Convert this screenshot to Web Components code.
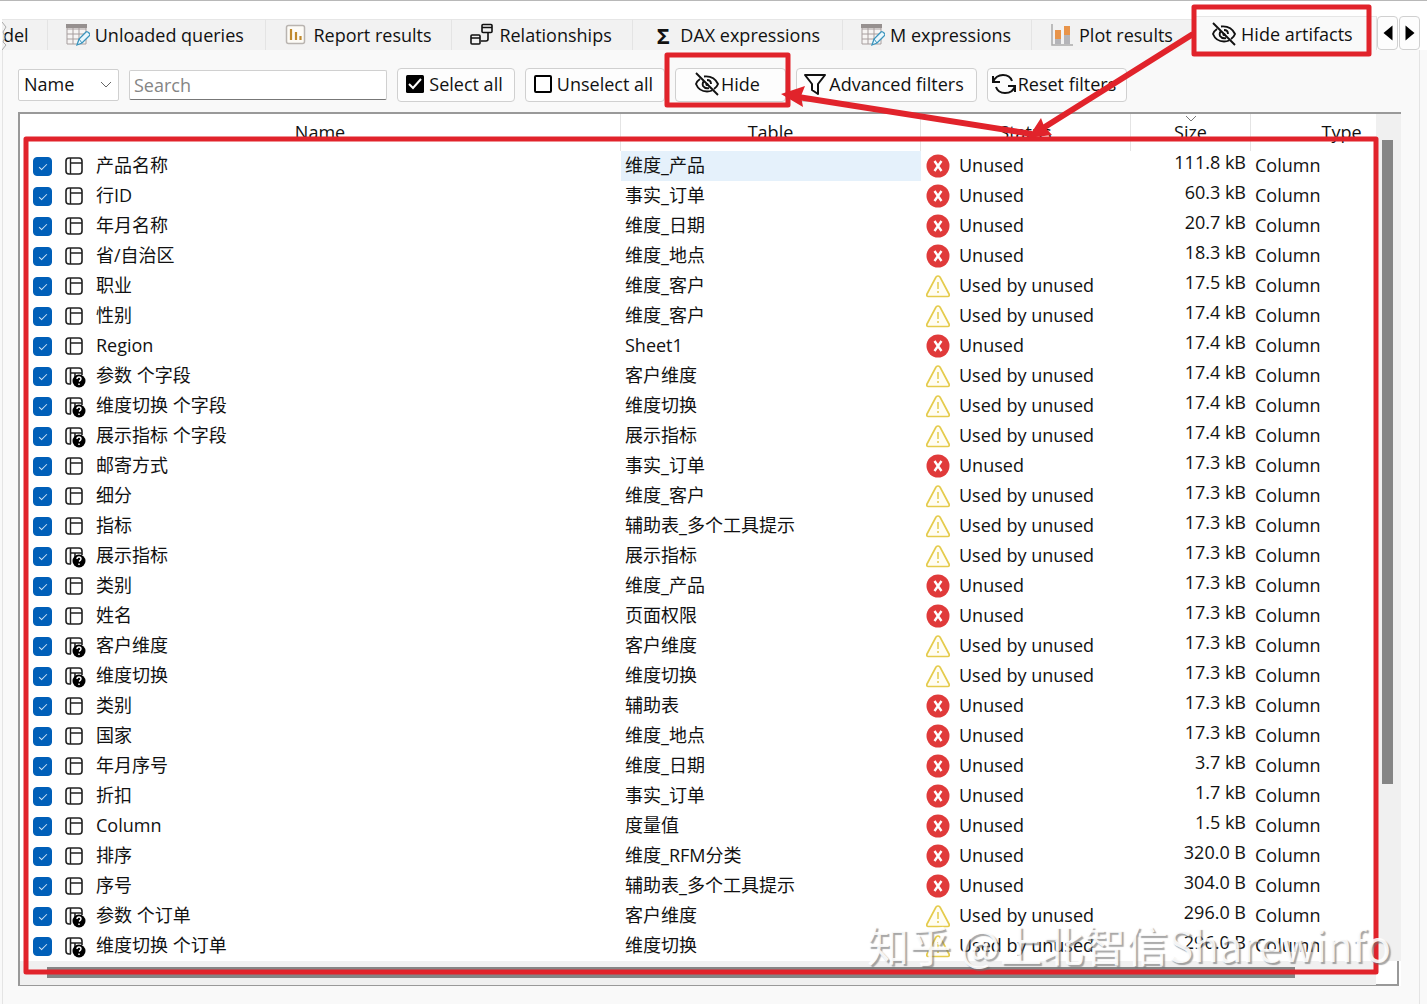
<!DOCTYPE html>
<html lang="zh">
<head>
<meta charset="utf-8">
<title>Hide artifacts</title>
<style>
  body {
    margin: 0;
    background: #f9f9f9;
    color: #111;
    font: 18px/24px "Open Sans", "Noto Sans CJK SC", sans-serif;
  }
</style>
</head>
<body>
<artifacts-app></artifacts-app>

<script>
const ICONS = {
  sheet: `<rect x="1" y="2" width="19" height="19" fill="#f7f5f4"/><path d="M1 2h19v19H1zM1 11h19M1 16h19M7 5v16M13 5v16M1 6h19" fill="none" stroke="#a79e9e"/><path d="M0 1h21v4H0z" fill="#96908f"/><path d="M11 22l2-6 7-7q1-1 3 1t0 3l-7 7z" fill="#e9f7fd" stroke="#3a94bd" stroke-width="1.3"/><path d="M13 16l3 4" stroke="#3a94bd"/>`,
  report: `<rect x="2.5" y="2.5" width="18" height="18" rx="2" fill="#fdfbf6" stroke="#b9b4b0" stroke-width="1.5"/><path d="M7 6v11M12 9v8M16.5 13v4" stroke="#c08a2d" stroke-width="2.2" fill="none"/>`,
  relations: `<path d="M13 1.5h8q1 0 1 1v6q0 1-1 1h-8q-1 0-1-1v-6q0-1 1-1zM12 4.5h10M2 12h7q1 0 1 1v7q0 1-1 1H2q-1 0-1-1v-7q0-1 1-1zM1 15h9M18 10v6q0 2-2 2h-5" fill="none" stroke="#111" stroke-width="1.6"/>`,
  plot: `<path d="M2 1v21h21" fill="none" stroke="#aaa" stroke-width="1.5"/><path d="M5 7h6v9H5zM14 3h6v9h-6z" fill="#e8944a"/><path d="M5 16h6v5H5zM14 12h6v9h-6z" fill="#b4b4b8"/>`,
  hide: `<path d="M5 7Q2 9 1 12q3 7.500 11 7.500 3 0 5-1M9 4.500q10-1 14 7.500-1 3-4 5M9 9q-2 2-1 5 2 3 6 2M12 8q4 0 4 4M1 1l22 22" fill="none" stroke="#111" stroke-width="1.9"/><circle cx="12" cy="12.500" r="1.500" fill="#111"/>`,
  checked: `<rect x="3" y="3" width="18" height="18" rx="1.5" fill="#000"/><path d="M6 12l4 4 8-9" fill="none" stroke="#fff" stroke-width="2"/>`,
  empty: `<rect x="4" y="4" width="16" height="16" rx="1" fill="#fff" stroke="#000" stroke-width="2"/>`,
  filter: `<path d="M2 3h20l-7 9v10l-6-4v-6z" fill="none" stroke="#111" stroke-width="2" stroke-linejoin="round"/>`,
  reset: `<path d="M1 4v6h7M1 10Q4 3 11 3q7 0 9 6M23 20v-6h-7M23 14q-2 7-10 7-7 0-9-6" fill="none" stroke="#111" stroke-width="2"/>`,
  unused: `<circle cx="12" cy="12" r="11.5" fill="#e03a3a"/><path d="M8.5 7l7 10M15.5 7l-7 10" stroke="#fff" stroke-width="2.4"/>`,
  warning: `<path d="M12 2q1 0 2 1l9 17q1 2-1 2.5H2Q0 22 1 20L10 3q1-1 2-1z" fill="#fffdf3" stroke="#e5cb4c" stroke-width="1.7"/><path d="M12 8v7M12 17v2" stroke="#e5cb4c" stroke-width="1.5"/>`,
  column: `<rect x="4" y="4" width="16" height="16" rx="3" fill="#fff" stroke="#222" stroke-width="1.6"/><path d="M8.5 4v16M8.5 9H20" stroke="#222" stroke-width="1.4"/>`,
  field: `<path d="M9 20H7q-3 0-3-3V7q0-3 3-3h10q3 0 3 3v4M8.5 4v16M8.5 9H20M13 9v4" fill="none" stroke="#222" stroke-width="1.6"/><circle cx="17" cy="17" r="6.5" fill="#000"/><path d="M15 15q0-2 2-2t2 2q0 1-2 2.5M17 19.5v1.5" fill="none" stroke="#fff" stroke-width="1.4"/>`,
  left: `<path d="M18 2v20L6 12z" fill="#000"/>`,
  right: `<path d="M6 2v20l12-10z" fill="#000"/>`
};

class UiIcon extends HTMLElement {
  connectedCallback() {
    if (this.shadowRoot) return;
    this.attachShadow({ mode: 'open' }).innerHTML = `
      <style>
        :host { display: inline-block; flex: none; width: 24px; height: 24px; }
        svg { display: block; width: 100%; height: 100%; }
      </style>
      <svg viewBox="0 0 24 24" aria-hidden="true">${ICONS[this.getAttribute('name')]}</svg>`;
  }
}
customElements.define('ui-icon', UiIcon);

class TabItem extends HTMLElement {
  connectedCallback() {
    this.attachShadow({ mode: 'open' }).innerHTML = `
      <style>
        :host { display: flex; min-width: 0; height: 31px; background: #f2f2f2; border-top: 1px solid #e6e6e6; border-right: 1px solid #e4e4e4; box-sizing: border-box; }
        :host([selected]) { height: 34px; background: #f9f9f9; }
        button { display: flex; flex: 1; align-items: center; gap: 5px; border: 0; padding: 0 0 0 18px; background: none; font: inherit; color: inherit; white-space: nowrap; }
        :host([clipped]) button { padding-left: 1px; }
      </style>
      <button role="tab" aria-selected="${this.hasAttribute('selected')}"><slot name="icon"></slot><slot></slot></button>`;
  }
}
customElements.define('tab-item', TabItem);

class ToolButton extends HTMLElement {
  connectedCallback() {
    this.attachShadow({ mode: 'open' }).innerHTML = `
      <style>
        :host { display: block; height: 34px; }
        button { display: flex; width: 100%; height: 100%; align-items: center; justify-content: center; gap: 2px; box-sizing: border-box; padding: 0 6px 2px 0; border: 1px solid #d0d0d0; border-radius: 4px; background: #fdfdfd; font: inherit; color: inherit; white-space: nowrap; }
      </style>
      <button><ui-icon name="${this.getAttribute('icon')}"></ui-icon><slot></slot></button>`;
  }
}
customElements.define('tool-button', ToolButton);

// name, table, status (x = unused, w = used by unused), size, field parameter
const ROWS = [
  ['产品名称', '维度_产品', 'x', '111.8 kB'],
  ['行ID', '事实_订单', 'x', '60.3 kB'],
  ['年月名称', '维度_日期', 'x', '20.7 kB'],
  ['省/自治区', '维度_地点', 'x', '18.3 kB'],
  ['职业', '维度_客户', 'w', '17.5 kB'],
  ['性别', '维度_客户', 'w', '17.4 kB'],
  ['Region', 'Sheet1', 'x', '17.4 kB'],
  ['参数 个字段', '客户维度', 'w', '17.4 kB', true],
  ['维度切换 个字段', '维度切换', 'w', '17.4 kB', true],
  ['展示指标 个字段', '展示指标', 'w', '17.4 kB', true],
  ['邮寄方式', '事实_订单', 'x', '17.3 kB'],
  ['细分', '维度_客户', 'w', '17.3 kB'],
  ['指标', '辅助表_多个工具提示', 'w', '17.3 kB'],
  ['展示指标', '展示指标', 'w', '17.3 kB', true],
  ['类别', '维度_产品', 'x', '17.3 kB'],
  ['姓名', '页面权限', 'x', '17.3 kB'],
  ['客户维度', '客户维度', 'w', '17.3 kB', true],
  ['维度切换', '维度切换', 'w', '17.3 kB', true],
  ['类别', '辅助表', 'x', '17.3 kB'],
  ['国家', '维度_地点', 'x', '17.3 kB'],
  ['年月序号', '维度_日期', 'x', '3.7 kB'],
  ['折扣', '事实_订单', 'x', '1.7 kB'],
  ['Column', '度量值', 'x', '1.5 kB'],
  ['排序', '维度_RFM分类', 'x', '320.0 B'],
  ['序号', '辅助表_多个工具提示', 'x', '304.0 B'],
  ['参数 个订单', '客户维度', 'w', '296.0 B', true],
  ['维度切换 个订单', '维度切换', 'w', '296.0 B', true]
];

class ArtifactGrid extends HTMLElement {
  connectedCallback() {
    this.attachShadow({ mode: 'open' }).innerHTML = `
      <style>
        :host { display: grid; grid-template-columns: 1fr 25px; border: solid #999; border-width: 2px 0 0 2px; background: #fff; }
        .view { overflow: hidden; }
        /* the last column runs on behind the scroll bar */
        table { width: calc(100% + 57px); table-layout: fixed; border-collapse: separate; border-spacing: 0; }
        th { height: 37px; padding: 0 0 2px; box-sizing: border-box; border-right: 1px solid #e4e4e4; font-weight: normal; position: relative; }
        td { height: 30px; padding: 0; box-sizing: border-box; white-space: nowrap; }
        td:nth-child(2), td:nth-child(5) { padding: 0 0 2px 4px; }
        td:nth-child(4) { padding-right: 5px; text-align: right; vertical-align: top; line-height: 22px; }
        tr:first-child td.current { background: #e5f1fb; }
        .sort { position: absolute; top: 1px; left: 0; right: 0; margin: auto; width: 12px; height: 7px; }
        .name, .status { display: flex; align-items: center; }
        .name { padding-left: 13px; gap: 10px; }
        .name label { padding-bottom: 2px; }
        .status { padding-left: 5px; gap: 9px; }
        .status span { padding-bottom: 2px; }
        input { appearance: none; width: 19px; height: 19px; margin: 0; border: 1px solid #005fb8; border-radius: 4px; background: #fff; display: grid; place-items: center; }
        input:checked { background: #005fb8; }
        input:checked::after { content: ""; width: 7px; height: 3px; border: solid #cfe2f3; border-width: 0 0 1px 1px; transform: rotate(-45deg); }
        .vbar, .hbar { background: #f0f0f0; display: flex; }
        .vbar { flex-direction: column; align-items: flex-start; padding: 26px 0 177px 6px; }
        .hbar { height: 25px; box-sizing: border-box; border-bottom: 1px solid #999; padding: 6px 81px 0 27px; }
        .vbar i { width: 11px; flex: 1; background: #858585; }
        .hbar i { height: 11px; flex: 1; background: #858585; }
        .corner { border: solid #999; border-width: 0 2px 2px 0; margin-right: 2px; }
      </style>
      <div class="view">
        <table>
          <colgroup><col><col style="width:300px"><col style="width:210px"><col style="width:120px"><col style="width:182px"></colgroup>
          <thead><tr><th>Name</th><th>Table</th><th>Status</th><th><svg class="sort" viewBox="0 0 12 7"><path d="M1 1l5 5 5-5" fill="none" stroke="#777"/></svg>Size</th><th>Type</th></tr></thead>
          <tbody></tbody>
        </table>
      </div>
      <div class="vbar"><i></i></div>
      <div class="hbar"><i></i></div>
      <div class="corner"></div>`;
    this.$body = this.shadowRoot.querySelector('tbody');
    this.renderRows();
  }

  renderRows() {
    this.$body.innerHTML = ROWS.map(([name, table, status, size, field], i) => `
      <tr>
        <td><div class="name">
          <input type="checkbox" id="row${i}" checked>
          <ui-icon name="${field ? 'field' : 'column'}"></ui-icon>
          <label for="row${i}">${name}</label>
        </div></td>
        <td class="current">${table}</td>
        <td><div class="status">
          <ui-icon name="${status === 'x' ? 'unused' : 'warning'}"></ui-icon>
          <span>${status === 'x' ? 'Unused' : 'Used by unused'}</span>
        </div></td>
        <td>${size}</td>
        <td>Column</td>
      </tr>`).join('');
  }
}
customElements.define('artifact-grid', ArtifactGrid);

// red boxes and arrows drawn over the window
class MarkupLayer extends HTMLElement {
  connectedCallback() {
    this.attachShadow({ mode: 'open' }).innerHTML = `
      <style>
        :host { position: absolute; inset: 0; overflow: hidden; pointer-events: none; }
        svg { position: absolute; top: -1px; left: 0; }
        .stamp { position: absolute; right: 36px; bottom: 34px; font-size: 42px; line-height: 52px; white-space: nowrap; color: rgba(255, 255, 255, .9); text-shadow: 2px 2px 1px rgba(110, 110, 110, .6); font-family: "Noto Sans CJK SC", sans-serif; }
      </style>
      <svg width="1427" height="1004" viewBox="0 0 1427 1004">
        <g fill="none" stroke="#e1232b" stroke-width="5" stroke-linejoin="round">
          <rect x="1194" y="7" width="175" height="47"/>
          <rect x="667" y="55" width="121" height="50"/>
          <rect x="26" y="139" width="1350" height="833"/>
          <path d="M1193 34L1040 130M1032 134L798 97" stroke-width="6"/>
        </g>
        <path d="M1028 138l13-20 3 8 8 9zM781 94l24-8-4 10 2 11z" fill="#e1232b"/>
      </svg>
      <div class="stamp"><slot></slot></div>`;
  }
}
customElements.define('markup-layer', MarkupLayer);

class ArtifactsApp extends HTMLElement {
  connectedCallback() {
    this.attachShadow({ mode: 'open' }).innerHTML = `
      <style>
        :host { display: flex; flex-direction: column; position: relative; min-height: 100vh; box-sizing: border-box; border-top: 1px solid #b8b8b8; }
        nav { display: flex; align-items: flex-end; padding: 15px 7px 0 2px; background: #fff; }
        .torn { flex: none; width: 5px; height: 28px; margin-right: -5px; z-index: 1; }
        .sigma { width: 24px; text-align: center; font-size: 22px; font-weight: bold; }
        .arrow { display: flex; align-items: center; justify-content: center; width: 21px; height: 34px; box-sizing: border-box; padding: 0; border: 1px solid #d0d0d0; border-radius: 4px; background: #fdfdfd; }
        .arrow ui-icon { width: 18px; height: 18px; }
        .arrow + .arrow { margin-left: 1px; }
        main { flex: 1; margin: 0 7px 0 2px; padding: 18px 18px 18px 15px; border: solid #e4e4e4; border-width: 0 1px; }
        .tools { display: flex; align-items: center; gap: 10px; margin-bottom: 10px; }
        .field { position: relative; display: flex; }
        select, input { box-sizing: border-box; font: inherit; color: inherit; background: #fff; border: 1px solid #d0d0d0; border-radius: 2px; }
        select { appearance: none; width: 101px; height: 32px; padding: 0 5px 2px; }
        .field svg { position: absolute; right: 7px; top: 12px; pointer-events: none; }
        input { width: 258px; height: 30px; padding: 0 4px; border-bottom-color: #777; }
        input::placeholder { color: #858585; }
      </style>
      <nav role="tablist">
        <svg class="torn" viewBox="0 0 5 28"><path d="M0 0l4 5-3 5 2 5-2 5 3 3-4 5" fill="none" stroke="#aaa"/></svg>
        <tab-item style="flex: 45 1 0" clipped>del</tab-item>
        <tab-item style="flex: 219 1 0"><ui-icon slot="icon" name="sheet"></ui-icon>Unloaded queries</tab-item>
        <tab-item style="flex: 186 1 0"><ui-icon slot="icon" name="report"></ui-icon>Report results</tab-item>
        <tab-item style="flex: 181 1 0"><ui-icon slot="icon" name="relations"></ui-icon>Relationships</tab-item>
        <tab-item style="flex: 210 1 0"><span slot="icon" class="sigma">Σ</span>DAX expressions</tab-item>
        <tab-item style="flex: 189 1 0"><ui-icon slot="icon" name="sheet"></ui-icon>M expressions</tab-item>
        <tab-item style="flex: 162 1 0"><ui-icon slot="icon" name="plot"></ui-icon>Plot results</tab-item>
        <tab-item style="flex: 183 1 0" selected><ui-icon slot="icon" name="hide"></ui-icon>Hide artifacts</tab-item>
        <button class="arrow" aria-label="Previous tabs"><ui-icon name="left"></ui-icon></button>
        <button class="arrow" aria-label="Next tabs"><ui-icon name="right"></ui-icon></button>
      </nav>
      <main>
        <div class="tools">
          <div class="field">
            <select aria-label="Search by"><option>Name</option></select>
            <svg width="12" height="8" viewBox="0 0 12 8"><path d="M1 1l5 5 5-5" fill="none" stroke="#666"/></svg>
          </div>
          <input type="text" placeholder="Search" aria-label="Search">
          <tool-button style="width: 118px" icon="checked">Select all</tool-button>
          <tool-button style="width: 140px" icon="empty">Unselect all</tool-button>
          <tool-button style="width: 111px" icon="hide">Hide</tool-button>
          <tool-button style="width: 181px" icon="filter">Advanced filters</tool-button>
          <tool-button style="width: 140px" icon="reset">Reset filters</tool-button>
        </div>
        <artifact-grid></artifact-grid>
      </main>
      <markup-layer>知乎 @上北智信Sharewinfo</markup-layer>`;
  }
}
customElements.define('artifacts-app', ArtifactsApp);
</script>
</body>
</html>
